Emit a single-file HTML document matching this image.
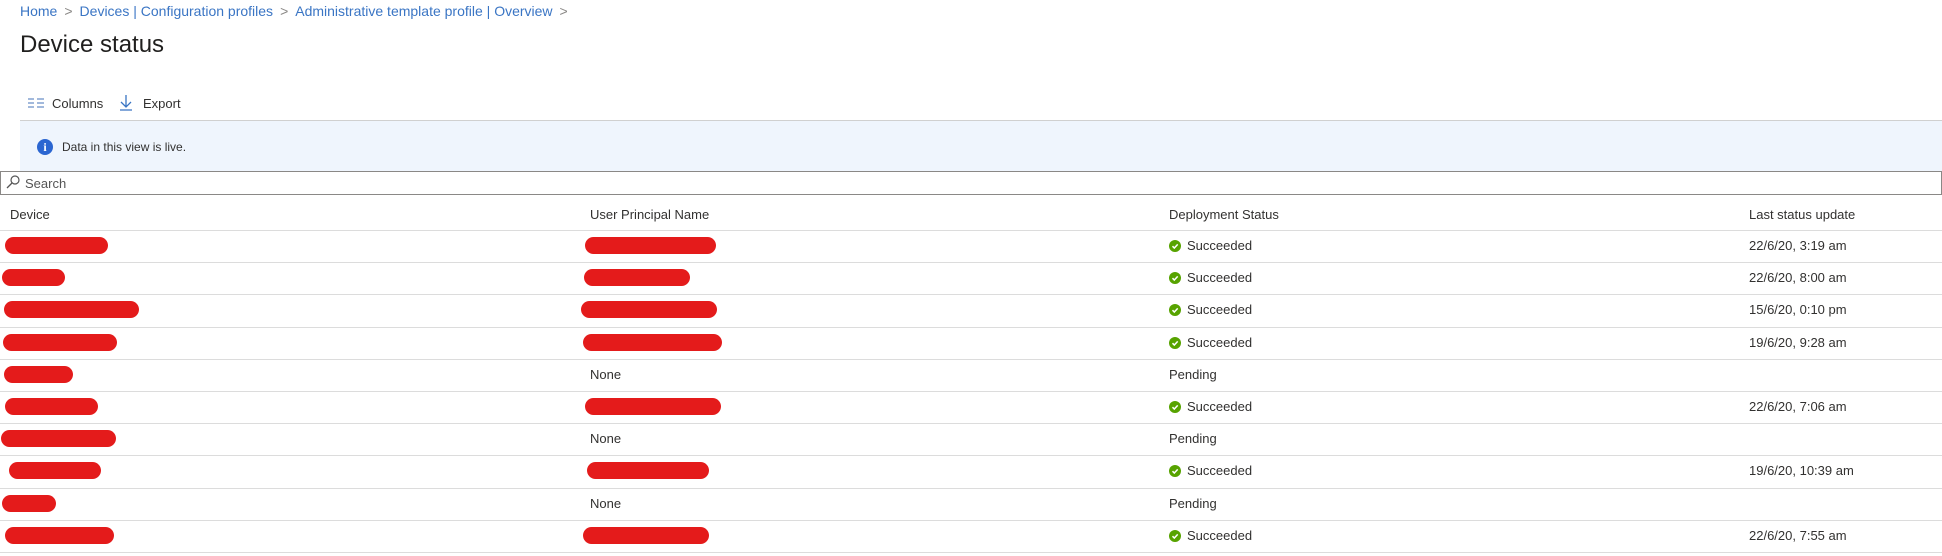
<!DOCTYPE html>
<html><head><meta charset="utf-8"><style>
body{margin:0;width:1942px;height:556px;overflow:hidden;background:#fff;font-family:"Liberation Sans",sans-serif;color:#323130;position:relative}
.a{position:absolute;white-space:nowrap}
.bc{top:3px;left:20px;font-size:14px;color:#3a75c4}
.bc .s{color:#8a8886;margin:0 7px}
.r{position:absolute;height:17px;background:#e41b1b;border-radius:9px}
.ln{position:absolute;left:0;width:1942px;height:1px;background:#dcdcdc}
.t{font-size:13px;color:#323130}
.ok{display:inline-block;width:12px;height:12px;border-radius:50%;background:#57a300;vertical-align:-2px;margin-right:6px;position:relative}
</style></head><body>
<div class="a bc">Home<span class="s">&gt;</span>Devices | Configuration profiles<span class="s">&gt;</span>Administrative template profile | Overview<span class="s">&gt;</span></div>
<div class="a" style="top:31px;left:20px;font-size:24px;color:#201f1e">Device status</div>
<svg class="a" style="left:27px;top:97px" width="18" height="12"><g stroke="#6a8fc8" stroke-width="1.3"><path d="M1 2h6M1 6h6M1 10h6M10 2h7M10 6h7M10 10h7"/></g></svg>
<div class="a t" style="left:52px;top:96px">Columns</div>
<svg class="a" style="left:119px;top:94px" width="14" height="18"><path d="M7 1v12M2 8l5 5 5-5M1 16h12" stroke="#3a75c4" stroke-width="1.3" fill="none"/></svg>
<div class="a t" style="left:143px;top:96px">Export</div>
<div class="a" style="left:20px;top:120px;width:1922px;height:51px;background:#eff5fd;border-top:1px solid #d0d0d0"></div>
<div class="a" style="left:37px;top:139px;width:16px;height:16px;border-radius:50%;background:#2b66d1;color:#fff;font-size:12px;font-weight:bold;text-align:center;line-height:16px;font-family:'Liberation Serif',serif">i</div>
<div class="a" style="left:62px;top:140px;font-size:12px">Data in this view is live.</div>
<div class="a" style="left:0;top:171px;width:1940px;height:22px;border:1px solid #8a8886"></div>
<svg class="a" style="left:6px;top:175px" width="14" height="14"><circle cx="9" cy="5" r="4" stroke="#555" fill="none" stroke-width="1.2"/><path d="M6 8L1 13" stroke="#555" stroke-width="1.3"/></svg>
<div class="a t" style="left:25px;top:176px;color:#555">Search</div>
<div class="a t" style="left:10px;top:207px">Device</div>
<div class="a t" style="left:590px;top:207px">User Principal Name</div>
<div class="a t" style="left:1169px;top:207px">Deployment Status</div>
<div class="a t" style="left:1749px;top:207px">Last status update</div>
<div class="ln" style="top:230px"></div>
<div id="rows"></div>
<script>
var d=[[5,108,585,716,'Succeeded','22/6/20, 3:19 am'],[2,65,584,690,'Succeeded','22/6/20, 8:00 am'],[4,139,581,717,'Succeeded','15/6/20, 0:10 pm'],[3,117,583,722,'Succeeded','19/6/20, 9:28 am'],[4,73,0,0,'Pending',''],[5,98,585,721,'Succeeded','22/6/20, 7:06 am'],[1,116,0,0,'Pending',''],[9,101,587,709,'Succeeded','19/6/20, 10:39 am'],[2,56,0,0,'Pending',''],[5,114,583,709,'Succeeded','22/6/20, 7:55 am']];
var h='';
d.forEach(function(r,i){var top=230+32.2*i;var c=top+16;
h+='<div class="r" style="left:'+r[0]+'px;width:'+(r[1]-r[0])+'px;top:'+(c-9)+'px"></div>';
if(r[2])h+='<div class="r" style="left:'+r[2]+'px;width:'+(r[3]-r[2])+'px;top:'+(c-9)+'px"></div>';
else h+='<div class="a t" style="left:590px;top:'+(c-8)+'px">None</div>';
h+='<div class="a t" style="left:1169px;top:'+(c-8)+'px">'+(r[4]=='Succeeded'?'<span class="ok"><svg width="12" height="12" style="position:absolute;left:0;top:0"><path d="M3.5 6.2l1.8 1.8 3.4-3.6" stroke="#fff" stroke-width="1.5" fill="none"/></svg></span>':'')+r[4]+'</div>';
if(r[5])h+='<div class="a t" style="left:1749px;top:'+(c-8)+'px">'+r[5]+'</div>';
h+='<div class="ln" style="top:'+Math.round(top+32.2)+'px"></div>';});
document.getElementById('rows').innerHTML=h;
</script>
</body></html>
